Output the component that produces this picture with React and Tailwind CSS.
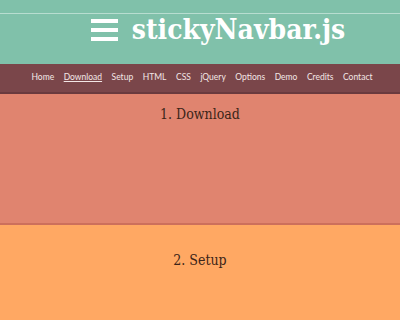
export default function App() {
  const items = ["Home", "Download", "Setup", "HTML", "CSS", "jQuery", "Options", "Demo", "Credits", "Contact"];
  return (
    <div className="w-[400px] h-[320px] overflow-hidden">
      <header className="relative h-[64px] bg-[#80c1aa]">
        <div className="absolute left-0 right-0 top-[13px] h-px bg-[#b8ddd0]" />
        <div className="flex items-center justify-center h-full pb-[4px] gap-[14px] pl-[36px]">
          <div className="flex flex-col gap-[5px] w-[27px]">
            <div className="h-[4px] bg-white" />
            <div className="h-[4px] bg-white" />
            <div className="h-[4px] bg-white" />
          </div>
          <span className="text-white text-[28px] leading-none font-['DejaVu_Serif_Condensed','DejaVu_Serif',serif] font-bold">stickyNavbar.js</span>
        </div>
      </header>
      <nav className="h-[30px] bg-[#7a464a] border-b-2 border-[#6a3a3e] flex items-center justify-center gap-[9.5px] pl-[4px] pb-[1px]">
        {items.map((t) => (
          <span key={t} className={`text-[8.5px] text-[#f3e6e6] font-['Lato',sans-serif] ${t === "Download" ? "underline" : ""}`}>{t}</span>
        ))}
      </nav>
      <section className="h-[131px] bg-[#e0846f] border-b-2 border-[#cc6f5c] pt-[10px] flex justify-center">
        <h2 className="text-[14px] text-[#3b2418] font-['DejaVu_Serif_Condensed','DejaVu_Serif',serif]">1. Download</h2>
      </section>
      <section className="h-[100px] bg-[#ffa863] pt-[25px] flex justify-center">
        <h2 className="text-[14px] text-[#3b2418] font-['DejaVu_Serif_Condensed','DejaVu_Serif',serif]">2. Setup</h2>
      </section>
    </div>
  );
}
